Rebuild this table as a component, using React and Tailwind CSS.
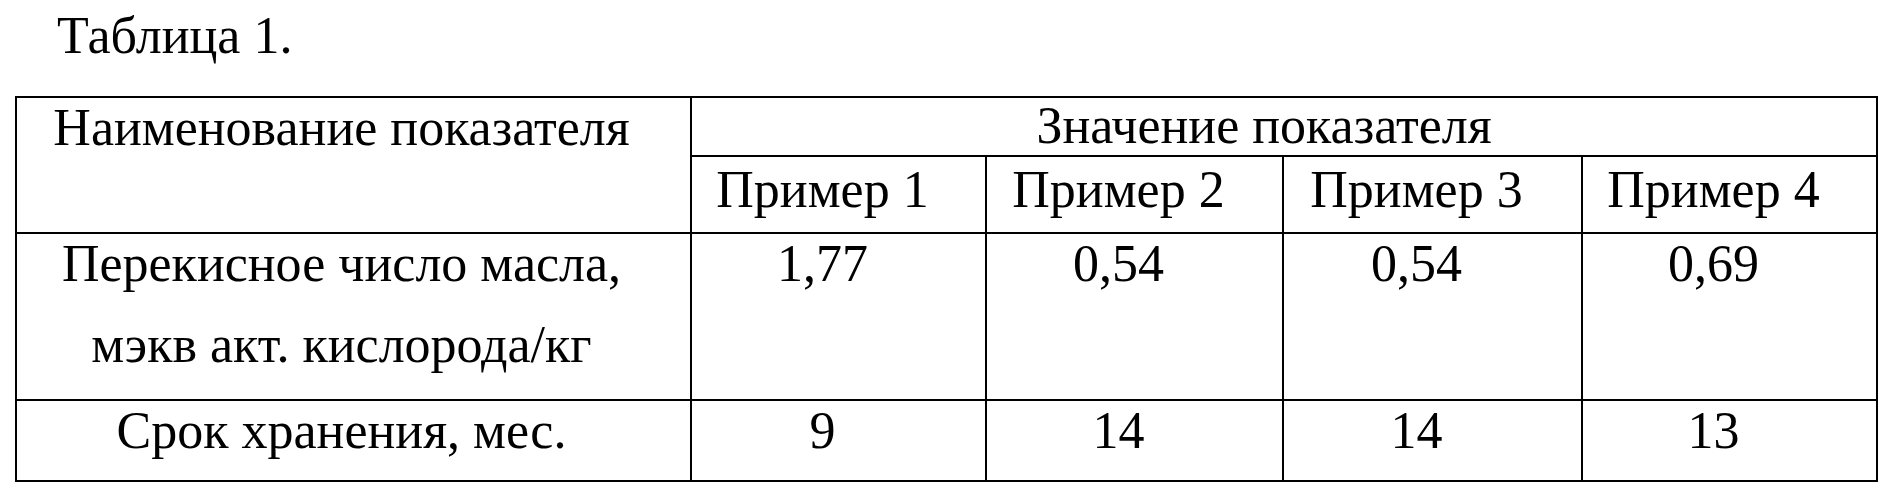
import React from 'react';

const samples = ['Пример 1', 'Пример 2', 'Пример 3', 'Пример 4'];
const peroxide = ['1,77', '0,54', '0,54', '0,69'];
const shelfLife = ['9', '14', '14', '13'];

export default function App() {
  return (
    <div className="min-h-[495px] w-[1889px] bg-white text-black [font-family:Liberation_Serif,Times_New_Roman,serif] text-[52px] leading-[60px]">
      <div className="pl-[57px] pt-[6px] h-[96px]">Таблица 1.</div>

      <div className="ml-[15px] w-[1863px] grid grid-cols-[675px_295px_297px_299px_295px] grid-rows-[59px_77px_167px_81px] border-l-2 border-t-2 border-black">
        {/* header */}
        <div className="row-span-2 border-r-2 border-b-2 border-black text-center pr-[24px]">
          Наименование показателя
        </div>
        <div className="col-span-4 border-r-2 border-b-2 border-black text-center pr-[40px] leading-[56px]">
          Значение показателя
        </div>
        {samples.map((s) => (
          <div key={s} className="border-r-2 border-b-2 border-black text-center pr-[32px] pt-[3px]">
            {s}
          </div>
        ))}

        {/* peroxide value */}
        <div className="border-r-2 border-b-2 border-black text-center pr-[24px] flex flex-col">
          <span>Перекисное число масла,</span>
          <span className="mt-[21px]">мэкв акт. кислорода/кг</span>
        </div>
        {peroxide.map((v, i) => (
          <div key={i} className="border-r-2 border-b-2 border-black text-center pr-[32px]">
            {v}
          </div>
        ))}

        {/* shelf life */}
        <div className="border-r-2 border-b-2 border-black text-center pr-[24px]">
          Срок хранения, мес.
        </div>
        {shelfLife.map((v, i) => (
          <div key={i} className="border-r-2 border-b-2 border-black text-center pr-[32px]">
            {v}
          </div>
        ))}
      </div>
    </div>
  );
}
